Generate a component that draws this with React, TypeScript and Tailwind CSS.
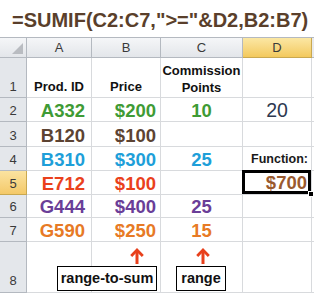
import React from 'react';

const GRID = 'border-r border-b border-[#d8dadd]';
const HDR = 'border-r border-b border-[#b4b9c0]';

const rows = [
  { n: 2, a: 'A332', b: '$200', c: '10', color: '#3f9b35' },
  { n: 3, a: 'B120', b: '$100', c: '', color: '#5c4332' },
  { n: 4, a: 'B310', b: '$300', c: '25', color: '#1e9fd9' },
  { n: 5, a: 'E712', b: '$100', c: '', color: '#ea411c' },
  { n: 6, a: 'G444', b: '$400', c: '25', color: '#6a3e98' },
  { n: 7, a: 'G590', b: '$250', c: '15', color: '#e77a25' },
];

function Arrow() {
  return (
    <svg width="14" height="16" viewBox="0 0 14 16" fill="none">
      <path d="M7 16 V2.5" stroke="#e8401c" strokeWidth="3" />
      <path d="M1.2 8 L7 2 L12.8 8" stroke="#e8401c" strokeWidth="2.8" strokeLinejoin="miter" />
    </svg>
  );
}

export default function App() {
  return (
    <div
      className="w-[314px] h-[293px] bg-white overflow-hidden flex flex-col"
      style={{ fontFamily: '"Liberation Sans", Arial, sans-serif' }}
    >
      <div className="h-[37px] shrink-0 pl-[12px] pt-[10px] text-[20px] leading-[20px] font-bold text-[#5a3f2b] whitespace-nowrap">
        =SUMIF(C2:C7,"&gt;="&amp;D2,B2:B7)
      </div>
      <div className="grid grid-cols-[27px_65px_69px_82px_69px_2px] grid-rows-[20px_40px_24px_25px_24px_24px_23px_24px_51px] border-t border-[#b4b9c0]">
        {/* header row */}
        <div className={`${HDR} bg-gradient-to-b from-[#f5f6f8] to-[#e3e6ea] relative`}>
          <div className="absolute right-[3px] bottom-[3px] w-0 h-0 border-l-[11px] border-l-transparent border-b-[11px] border-b-[#b9bcc1]" />
        </div>
        {['A', 'B', 'C'].map((l) => (
          <div
            key={l}
            className={`${HDR} bg-gradient-to-b from-[#f5f6f8] to-[#e3e6ea] flex items-center justify-center text-[13px] text-[#3a3a3a]`}
          >
            {l}
          </div>
        ))}
        <div className="border-r border-b border-[#c9a850] bg-gradient-to-b from-[#fbe7a3] to-[#f3c95c] flex items-center justify-center text-[13px] text-[#3a3a3a]">
          D
        </div>
        <div className="border-b border-[#b4b9c0] bg-[#e8eaed]" />

        {/* row 1 */}
        <div className={`${HDR} bg-[#e4e7eb] flex items-end justify-center pb-[1px] text-[13px] text-[#3a3a3a]`}>1</div>
        <div className={`${GRID} flex items-end justify-center pb-[1px] text-[13px] font-bold text-[#111]`}>Prod. ID</div>
        <div className={`${GRID} flex items-end justify-center pb-[1px] text-[13px] font-bold text-[#111]`}>Price</div>
        <div className={`${GRID} flex flex-col items-center justify-end pb-[1px] text-[13px] leading-[17px] font-bold text-[#111]`}>
          <span>Commission</span>
          <span>Points</span>
        </div>
        <div className={GRID} />
        <div className="border-b border-[#d8dadd]" />

        {rows.map((r) => (
          <React.Fragment key={r.n}>
            <div
              className={
                r.n === 5
                  ? 'border-r border-b border-[#c9a850] bg-gradient-to-b from-[#fbe3a0] to-[#f4c968] flex items-end justify-center pb-[1px] text-[13px] text-[#3a3a3a]'
                  : `${HDR} bg-[#e4e7eb] flex items-end justify-center pb-[1px] text-[13px] text-[#3a3a3a]`
              }
            >
              {r.n}
            </div>
            <div
              className={`${GRID} flex items-end justify-end pr-[6px] text-[18.5px] leading-[20px] font-bold`}
              style={{ color: r.color }}
            >
              {r.a}
            </div>
            <div
              className={`${GRID} flex items-end justify-end pr-[4px] text-[18.5px] leading-[20px] font-bold`}
              style={{ color: r.color }}
            >
              {r.b}
            </div>
            <div
              className={`${GRID} flex items-end justify-center text-[18.5px] leading-[20px] font-bold`}
              style={{ color: r.color }}
            >
              {r.c}
            </div>
            {r.n === 2 ? (
              <div className={`${GRID} flex items-end justify-center text-[19.5px] leading-[21px] text-[#2d3850]`}>20</div>
            ) : r.n === 4 ? (
              <div className={`${GRID} flex items-end justify-end pr-[3px] pb-[3px] text-[12.5px] leading-[15px] font-bold text-[#1a1a1a]`}>
                Function:
              </div>
            ) : r.n === 5 ? (
              <div className={`${GRID} relative flex items-end justify-end pr-[4px] pb-[1px] text-[18.5px] leading-[20px] font-bold text-[#9a5a2e]`}>
                <div className="absolute -left-[1px] -top-[1px] right-0 bottom-0 border-[3px] border-black" />
                <div className="absolute -right-[3px] -bottom-[3px] w-[6px] h-[6px] bg-black border border-white" />
                <span className="relative">$700</span>
              </div>
            ) : (
              <div className={GRID} />
            )}
            <div className="border-b border-[#d8dadd]" />
          </React.Fragment>
        ))}

        {/* row 8 */}
        <div className={`${HDR} bg-[#e4e7eb] flex items-end justify-center pb-[2px] text-[13px] text-[#3a3a3a]`}>8</div>
        <div className={`${GRID} relative`}>
          <div className="absolute left-[30px] top-[24px] w-[100px] h-[25px] z-10 bg-white border border-black flex items-center justify-center text-[14.5px] font-bold text-[#111] whitespace-nowrap">
            range-to-sum
          </div>
        </div>
        <div className={`${GRID} relative`}>
          <div className="absolute left-[38px] top-[6px]">
            <Arrow />
          </div>
        </div>
        <div className={`${GRID} relative`}>
          <div className="absolute left-[35px] top-[6px]">
            <Arrow />
          </div>
          <div className="absolute left-[15px] top-[24px] w-[50px] h-[25px] z-10 bg-white border border-black flex items-center justify-center text-[14.5px] font-bold text-[#111]">
            range
          </div>
        </div>
        <div className={GRID} />
        <div className="border-b border-[#d8dadd]" />
      </div>
    </div>
  );
}
